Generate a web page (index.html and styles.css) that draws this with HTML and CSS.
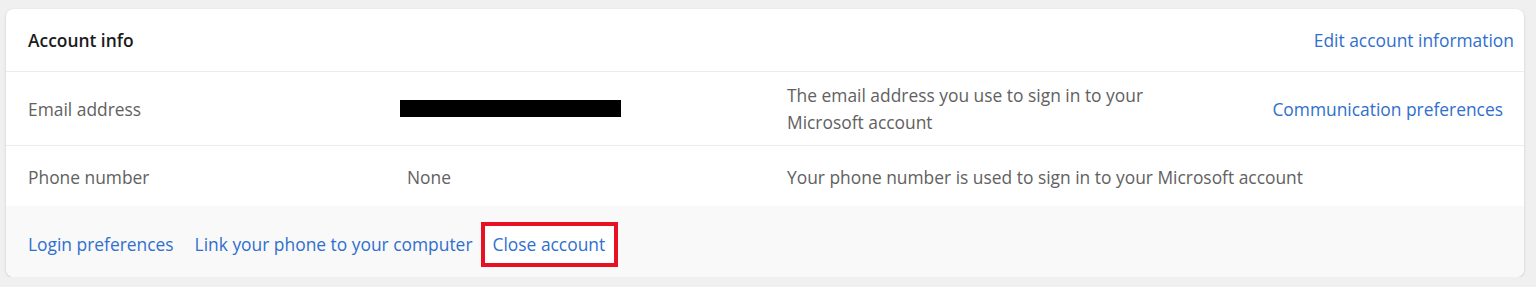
FILE: index.html
```html
<!DOCTYPE html>
<html lang="en">
<head>
    <meta charset="UTF-8">
    <meta name="viewport" content="width=device-width, initial-scale=1.0">
    <title>Account info</title>
    <link rel="stylesheet" href="styles.css">
</head>
<body>
    <div class="card">
        <div class="card-header">
            <h2>Account info</h2>
            <a href="#" class="link header-link">Edit account information</a>
        </div>

        <div class="row row-email">
            <div class="cell label">Email address</div>
            <div class="cell value"><span class="redacted"></span></div>
            <div class="cell desc desc-wrap">The email address you use to sign in to your Microsoft account</div>
            <a href="#" class="link action">Communication preferences</a>
        </div>

        <div class="row row-phone">
            <div class="cell label">Phone number</div>
            <div class="cell value value-text">None</div>
            <div class="cell desc">Your phone number is used to sign in to your Microsoft account</div>
        </div>

        <div class="card-footer">
            <a href="#" class="link">Login preferences</a>
            <a href="#" class="link">Link your phone to your computer</a>
            <a href="#" class="link highlighted">Close account</a>
        </div>
    </div>
</body>
</html>
```

FILE: styles.css
```css
* {
    box-sizing: border-box;
}
body {
    margin: 0;
    padding: 9px 12px 0 6px;
    background: #f0f0f0;
    font-family: 'Open Sans', 'Noto Sans', sans-serif;
    font-size: 17.4px;
    color: #616161;
}
.card {
    background: white;
    border-radius: 8px;
    box-shadow: 0 1px 3px rgba(0,0,0,0.15);
    overflow: hidden;
}
.card-header {
    display: flex;
    align-items: center;
    justify-content: space-between;
    height: 63px;
    padding: 0 10px 0 22px;
    border-bottom: 1px solid #ececec;
}
h2 {
    margin: 0;
    font-size: 17.4px;
    font-weight: 600;
    color: #1b1b1b;
}
.link {
    color: #2f6fcd;
    text-decoration: none;
}
.row {
    display: flex;
    align-items: center;
    padding: 0 21px 0 22px;
    border-bottom: 1px solid #ececec;
}
.row-email {
    height: 74px;
}
.row-phone {
    height: 60px;
    padding-top: 2px;
    border-bottom: none;
}
.label {
    width: 372px;
    flex-shrink: 0;
}
.value {
    width: 387px;
    flex-shrink: 0;
}
.value-text {
    padding-left: 7px;
}
.redacted {
    display: block;
    width: 221px;
    height: 17px;
    background: #000;
}
.desc {
    flex: 1;
    line-height: 27px;
}
.desc-wrap {
    max-width: 370px;
}
.action {
    margin-left: auto;
}
.card-footer {
    display: flex;
    align-items: center;
    gap: 21px;
    height: 71px;
    padding: 5px 22px 0;
    background: #f9f9f9;
}
.highlighted {
    margin-left: -13px;
    padding: 6px 9px 7px 8px;
    border: 4px solid #e81123;
    background: white;
}
```
